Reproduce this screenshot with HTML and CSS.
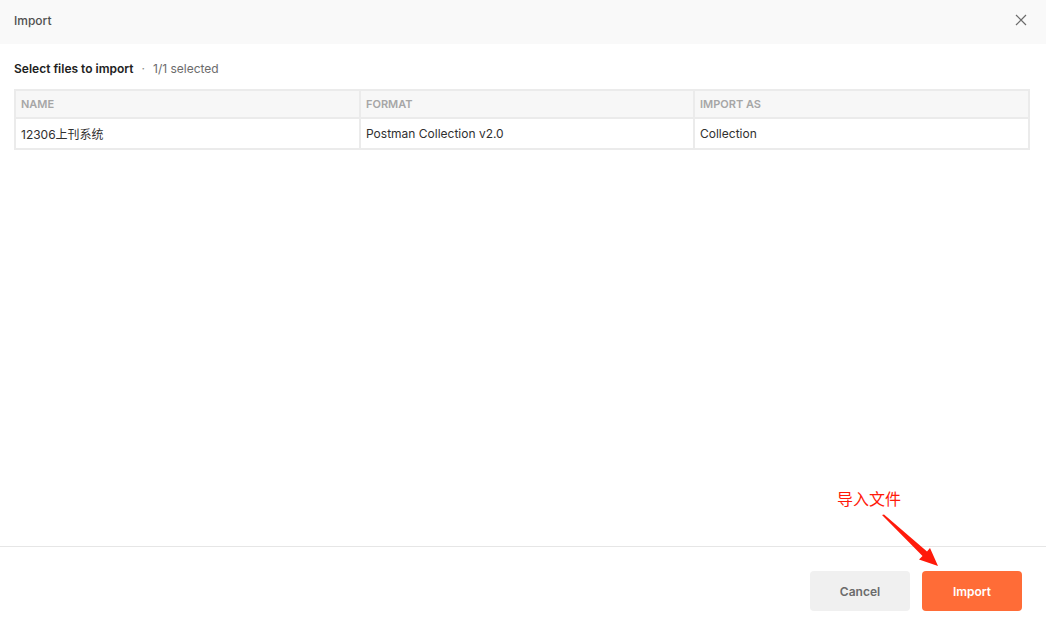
FILE: index.html
```html
<!DOCTYPE html>
<html lang="en">
<head>
    <meta charset="UTF-8">
    <meta name="viewport" content="width=device-width, initial-scale=1.0">
    <title>Import</title>
    <link rel="stylesheet" href="styles.css">
</head>
<body>
    <div class="modal">
        <header class="modal-head">
            <span class="modal-title">Import</span>
            <button class="close" aria-label="Close">
                <svg width="12" height="12" viewBox="0 0 12 12">
                    <path d="M1 1L11 11M11 1L1 11" stroke="#6b6b6b" stroke-width="1.2" fill="none"/>
                </svg>
            </button>
        </header>
        <main class="modal-body">
            <p class="summary"><b>Select files to import</b><span class="dot">·</span><span class="count">1/1 selected</span></p>
            <table class="files">
                <colgroup>
                    <col class="c-name">
                    <col class="c-format">
                    <col class="c-as">
                </colgroup>
                <thead>
                    <tr><th>Name</th><th>Format</th><th>Import as</th></tr>
                </thead>
                <tbody>
                    <tr><td>12306上刊系统</td><td>Postman Collection v2.0</td><td>Collection</td></tr>
                </tbody>
            </table>
        </main>
        <footer class="modal-foot">
            <button class="btn btn-cancel">Cancel</button>
            <button class="btn btn-import">Import</button>
        </footer>
    </div>
    <!-- annotation drawn on top of the screenshot -->
    <div class="note">
        <span class="note-text">导入文件</span>
        <svg class="note-arrow" width="120" height="90" viewBox="830 486 120 90">
            <polygon points="882,515 884,514.5 927,551.5 930,548 938,566 919,559.5 922.5,556" fill="#ff1a0a"/>
        </svg>
    </div>
</body>
</html>
```

FILE: styles.css
```css
*{
    box-sizing: border-box;
}
html,body{
    margin: 0;
    height: 100%;
}
body{
    font-family: Inter, "Noto Sans", "Noto Sans CJK SC", sans-serif;
    color: #212121;
    background: white;
    position: relative;
}
.modal{
    display: flex;
    flex-direction: column;
    height: 631px;
}
.modal-head{
    height: 44px;
    background-color: #f9f9f9;
    display: flex;
    align-items: center;
    justify-content: space-between;
    padding: 0 18px 4px 14px;
}
.modal-title{
    font-size: 12px;
    font-weight: 500;
    color: #505050;
}
.close{
    border: none;
    background: none;
    padding: 0;
    width: 14px;
    height: 14px;
    display: flex;
    align-items: center;
    justify-content: center;
}
.modal-body{
    flex: 1;
    padding: 16px 14px 0 14px;
}
.summary{
    margin: 0 0 12px 0;
    font-size: 12px;
    line-height: 17px;
}
.summary b{
    font-weight: 600;
    color: #212121;
}
.dot{
    color: #8a8a8a;
    margin: 0 8px;
}
.count{
    color: #6b6b6b;
}
.files{
    width: 1016px;
    border-collapse: collapse;
    border: 2px solid #ebebeb;
    font-size: 12px;
    table-layout: fixed;
}
.c-name{ width: 345px; }
.c-format{ width: 334px; }
.files th,.files td{
    border: 2px solid #ebebeb;
    text-align: left;
    padding: 0 5px;
}
.files th{
    height: 28px;
    background-color: #f7f7f7;
    font-size: 11px;
    font-weight: 600;
    text-transform: uppercase;
    color: #a6a6a6;
}
.files td{
    height: 31px;
    color: #303030;
}
.modal-foot{
    border-top: 1px solid #e6e6e6;
    padding: 24px 24px 20px 0;
    display: flex;
    justify-content: flex-end;
    gap: 12px;
}
.btn{
    width: 100px;
    height: 40px;
    border: none;
    border-radius: 4px;
    font-family: inherit;
    font-size: 12px;
    font-weight: 600;
    padding-bottom: 1px;
}
.btn-cancel{
    background-color: #f0f0f0;
    color: #6b6b6b;
}
.btn-import{
    background-color: #ff6c37;
    color: white;
}
.note{
    position: absolute;
    left: 830px;
    top: 486px;
    width: 120px;
    height: 90px;
    pointer-events: none;
}
.note-text{
    position: absolute;
    left: 7px;
    top: 2px;
    font-family: "Noto Sans CJK SC", sans-serif;
    font-size: 16px;
    line-height: 20px;
    color: #ff1a0a;
}
.note-arrow{
    position: absolute;
    left: 0;
    top: 0;
}
```
